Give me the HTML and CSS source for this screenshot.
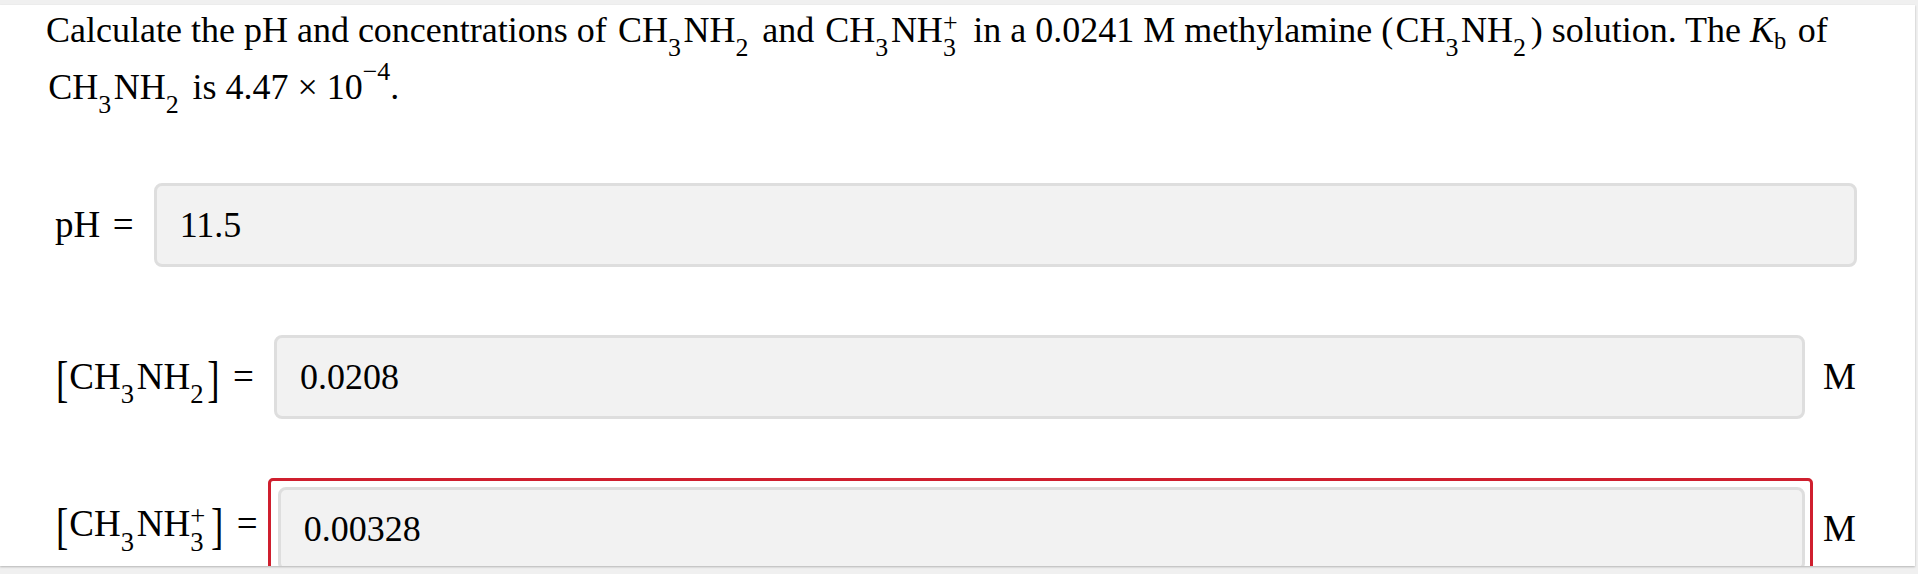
FILE: index.html
```html
<!DOCTYPE html>
<html lang="en">
<head>
<meta charset="utf-8">
<title>Methylamine pH</title>
<link rel="stylesheet" href="styles.css">
</head>
<body>
<div class="card">
  <p class="question">Calculate the pH and concentrations of <span class="chem">CH<sub>3</sub>NH<sub>2</sub></span> and <span class="chem">CH<sub>3</sub>NH<span class="ss"><span class="ss-sup">+</span><span class="ss-sub">3</span></span></span> in a 0.0241 M methylamine (<span class="chem">CH<sub>3</sub>NH<sub>2</sub></span>) solution. The <i class="k">K</i><sub class="kb">b</sub> of <span class="chem">CH<sub>3</sub>NH<sub>2</sub></span> is <span class="num">4.47 × 10<sup class="exp">−4</sup></span>.</p>

  <div class="answers">
    <div class="row">
      <span class="label">pH<span class="eq">=</span></span>
      <div class="field">
        <div class="input">11.5</div>
      </div>
    </div>

    <div class="row">
      <span class="label"><span class="br">[</span><span class="chem">CH<sub>3</sub>NH<sub>2</sub></span><span class="br">]</span><span class="eq">=</span></span>
      <div class="field">
        <div class="input">0.0208</div>
      </div>
      <span class="unit">M</span>
    </div>

    <div class="row">
      <span class="label"><span class="br">[</span><span class="chem">CH<sub>3</sub>NH<span class="ss"><span class="ss-sup">+</span><span class="ss-sub">3</span></span></span><span class="br">]</span><span class="eq">=</span></span>
      <div class="field field-error">
        <div class="input">0.00328</div>
      </div>
      <span class="unit">M</span>
    </div>
  </div>
</div>
</body>
</html>
```

FILE: styles.css
```css
html, body {
  margin: 0;
  padding: 0;
}

body {
  background: #f0f0f0;
  font-family: "Liberation Serif", "Times New Roman", serif;
  color: #000;
  height: 574px;
  overflow: hidden;
}

.card {
  background: #fff;
  margin: 5px 3px 0 0;
  height: 561px;
  padding: 0 50px 0 46px;
  box-shadow: 0 1px 2px rgba(0, 0, 0, 0.25);
  overflow: hidden;
}

.question {
  margin: -1px 0 0;
  font-size: 36px;
  line-height: 52px;
}

.num {
  font-family: "Liberation Serif", "Times New Roman", serif;
}

sub, sup {
  line-height: 0;
  font-size: 0.72em;
  font-family: "Liberation Serif", "Times New Roman", serif;
}

.chem {
  margin: 0 0.06em;
}

.chem sub {
  vertical-align: -0.54em;
  margin-right: 0.1em;
}

.ss {
  display: inline-block;
  font-size: 0.72em;
  line-height: 0.95;
  vertical-align: -0.54em;
  margin-right: 0.18em;
}

.ss-sup,
.ss-sub {
  display: block;
}

.question .ss {
  line-height: 0;
  padding-top: 0.95em;
}

.question .ss-sup {
  margin-top: -0.95em;
  line-height: 0.95;
}

.question .ss-sub {
  line-height: 0.95;
}

.k {
  font-style: italic;
}

.kb {
  vertical-align: -0.3em;
  font-size: 0.68em;
  margin-right: 0.1em;
}

.exp {
  vertical-align: 0.75em;
}

.answers {
  display: flex;
  flex-direction: column;
  gap: 50px;
  margin-top: 61px;
}

.row {
  display: flex;
  align-items: center;
  padding-left: 9px;
  font-size: 37px;
}

.label {
  white-space: nowrap;
}

.label .chem {
  margin: 0;
}

.eq {
  margin-left: 0.34em;
}

.br {
  display: inline-block;
  margin: 0 1px;
  transform: translateY(2px) scaleY(1.38);
}

.field {
  flex: 1;
  margin-left: 10px;
  border: 3px solid transparent;
  border-radius: 5px;
  padding: 6px 5px 6px 7px;
}

.field-error {
  border-color: #cf1f2e;
}

.input {
  height: 78px;
  box-sizing: content-box;
  background: #f2f2f2;
  border: 3px solid #dedede;
  border-radius: 8px;
  padding: 0 23px;
  display: flex;
  align-items: center;
  font-size: 36px;
}

.unit {
  width: 42px;
  margin-left: 10px;
  font-size: 37px;
}
```
